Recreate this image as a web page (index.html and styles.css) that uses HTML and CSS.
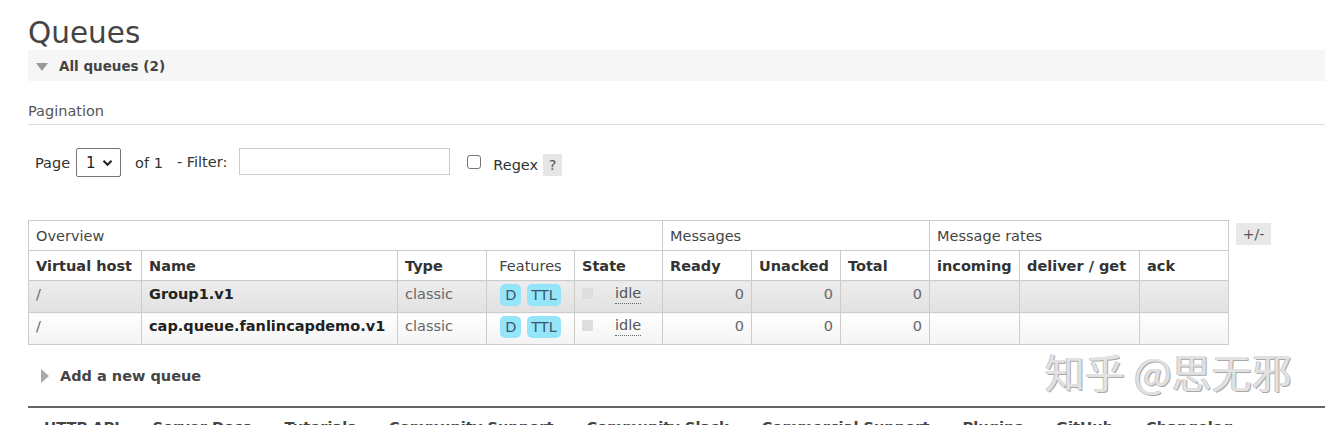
FILE: index.html
```html
<!DOCTYPE html>
<html lang="en">
<head>
<meta charset="utf-8">
<title>Queues</title>
<link rel="stylesheet" href="styles.css">
</head>
<body>
<div class="page">
  <h1 class="title">Queues</h1>
  <div class="section">
    <h2 class="sec-head"><span class="tri-down"></span>All queues (2)</h2>
    <div class="sec-body">
      <h3 class="pag-title">Pagination</h3>
      <div class="pag-row">
        <span class="lbl">Page</span>
        <div class="fake-select"><span>1</span>
          <svg class="chev" width="11" height="8" viewBox="0 0 11 8"><path d="M1.5 1.8 L5.5 5.8 L9.5 1.8" fill="none" stroke="#222" stroke-width="2"/></svg>
        </div>
        <span class="lbl of">of 1</span>
        <span class="lbl filter">- Filter:</span>
        <input class="filter-input" type="text">
        <span class="checkbox"></span>
        <span class="lbl regex">Regex</span>
        <span class="help">?</span>
      </div>
      <div class="table-wrap">
        <table class="list">
          <colgroup>
            <col class="c113"><col class="c256"><col class="c89"><col class="c88"><col class="c88">
            <col class="c89"><col class="c89"><col class="c89"><col class="c90"><col class="c120"><col class="c89">
          </colgroup>
          <thead>
            <tr class="group">
              <th colspan="5">Overview</th>
              <th colspan="3">Messages</th>
              <th colspan="3">Message rates</th>
            </tr>
            <tr class="cols">
              <th>Virtual host</th>
              <th>Name</th>
              <th>Type</th>
              <th class="plain center">Features</th>
              <th>State</th>
              <th>Ready</th>
              <th>Unacked</th>
              <th>Total</th>
              <th>incoming</th>
              <th>deliver / get</th>
              <th>ack</th>
            </tr>
          </thead>
          <tbody>
            <tr class="alt1">
              <td class="light">/</td>
              <td class="name">Group1.v1</td>
              <td class="light">classic</td>
              <td class="center"><span class="badge">D</span><span class="badge">TTL</span></td>
              <td><span class="state"><span class="sq"></span><abbr class="idle">idle</abbr></span></td>
              <td class="num">0</td>
              <td class="num">0</td>
              <td class="num">0</td>
              <td></td><td></td><td></td>
            </tr>
            <tr class="alt2">
              <td class="light">/</td>
              <td class="name">cap.queue.fanlincapdemo.v1</td>
              <td class="light">classic</td>
              <td class="center"><span class="badge">D</span><span class="badge">TTL</span></td>
              <td><span class="state"><span class="sq"></span><abbr class="idle">idle</abbr></span></td>
              <td class="num">0</td>
              <td class="num">0</td>
              <td class="num">0</td>
              <td></td><td></td><td></td>
            </tr>
          </tbody>
        </table>
        <span class="plusminus">+/-</span>
      </div>
    </div>
  </div>
  <div class="sec-closed"><span class="tri-right"></span>Add a new queue</div>
  <div class="footer">
    <a>HTTP API</a>
    <a>Server Docs</a>
    <a>Tutorials</a>
    <a>Community Support</a>
    <a>Community Slack</a>
    <a>Commercial Support</a>
    <a>Plugins</a>
    <a>GitHub</a>
    <a>Changelog</a>
  </div>
</div>
<div class="watermark">知乎 @思无邪</div>
</body>
</html>
```
FILE: styles.css
```css
html, body {
  margin: 0;
  padding: 0;
  background: #fff;
  overflow: hidden;
}
body {
  font-family: "DejaVu Sans", Verdana, sans-serif;
  font-size: 14.5px;
  color: #484848;
  position: relative;
  width: 1325px;
  height: 425px;
}
.page {
  padding-left: 28px;
}
.title {
  margin: 0;
  padding-top: 16px;
  font-size: 29.5px;
  font-weight: normal;
  line-height: 34px;
  color: #444;
}
.sec-head {
  margin: 0;
  height: 31px;
  background: #f6f6f6;
  display: flex;
  align-items: center;
  font-size: 13.5px;
  font-weight: bold;
  color: #444;
}
.tri-down {
  width: 0;
  height: 0;
  border-left: 6px solid transparent;
  border-right: 6px solid transparent;
  border-top: 8px solid #999;
  margin-left: 8px;
  margin-right: 11px;
  margin-top: 2px;
}
.pag-title {
  margin: 21px 0 0 0;
  font-size: 14.5px;
  font-weight: normal;
  line-height: 18px;
  padding-bottom: 4px;
  border-bottom: 1px solid #ddd;
  color: #555;
}
.pag-row {
  margin-top: 23px;
  display: flex;
  align-items: center;
  height: 29px;
  padding-left: 7px;
  color: #333;
}
.lbl { white-space: nowrap; }
.fake-select {
  margin-left: 6px;
  width: 45px;
  height: 29px;
  box-sizing: border-box;
  border: 1px solid #767676;
  border-radius: 2px;
  display: flex;
  align-items: center;
  justify-content: space-between;
  padding: 0 7px 0 9px;
  color: #222;
  font-size: 15px;
}
.of { margin-left: 14px; }
.filter { margin-left: 14px; margin-top: -2px; }
.filter-input {
  margin: 0 0 0 12px;
  width: 211px;
  height: 27px;
  box-sizing: border-box;
  border: 1px solid #ccc;
  padding: 0;
  align-self: flex-start;
}
.checkbox {
  margin-left: 17px;
  width: 14px;
  height: 14px;
  box-sizing: border-box;
  border: 1px solid #767676;
  border-radius: 3px;
  margin-top: -2px;
}
.regex { margin-left: 12px; margin-top: 4px; }
.help {
  margin-left: 5px;
  width: 19px;
  height: 22px;
  background: #e6e6e6;
  color: #555;
  display: flex;
  align-items: center;
  justify-content: center;
  margin-top: 4px;
}
.table-wrap {
  margin-top: 43px;
  display: flex;
  align-items: flex-start;
}
.list {
  border-collapse: collapse;
  table-layout: fixed;
  width: 1200px;
  border: 1px solid #ccc;
}
.c113 { width: 113px; }
.c256 { width: 256px; }
.c89 { width: 89px; }
.c88 { width: 88px; }
.c90 { width: 90px; }
.c120 { width: 120px; }
.list th, .list td {
  border: 1px solid #ccc;
  padding: 0 7px;
  text-align: left;
  white-space: nowrap;
  overflow: hidden;
}
.list tr.group th {
  height: 29px;
  font-weight: normal;
  color: #444;
}
.list tr.cols th {
  height: 29px;
  font-weight: bold;
  color: #333;
}
.list tr.cols th.plain { font-weight: normal; color: #444; }
.list .center { text-align: center; }
.list td {
  height: 32px;
  vertical-align: top;
  padding-top: 2px;
  line-height: 22px;
  box-sizing: border-box;
}
.list tr.alt1 td { background: linear-gradient(#ededed, #e1e1e1); }
.list tr.alt2 td { background: linear-gradient(#ffffff, #f3f3f3); }
.list td.light { color: #666; }
.list td.name { font-weight: bold; color: #222; }
.list td.num { text-align: right; color: #666; }
.badge {
  display: inline-block;
  background: #95e5fa;
  color: #3d5866;
  border-radius: 5px;
  padding: 0 4px;
  min-width: 13px;
  line-height: 22px;
  margin: 1px 3px 0;
  text-align: center;
}
.state {
  display: flex;
  align-items: flex-start;
}
.sq {
  width: 11px;
  height: 11px;
  background: #dedede;
  margin-top: 5px;
  margin-right: 22px;
}
.idle {
  text-decoration: none;
  border-bottom: 1px dotted #666;
  line-height: 20px;
  color: #555;
}
.plusminus {
  margin-left: 7px;
  margin-top: 3px;
  width: 35px;
  height: 22px;
  background: #e8e8e8;
  color: #555;
  display: flex;
  align-items: center;
  justify-content: center;
  font-size: 14px;
}
.sec-closed {
  margin-top: 20px;
  height: 22px;
  display: flex;
  align-items: center;
  font-weight: bold;
  color: #444;
}
.tri-right {
  width: 0;
  height: 0;
  border-top: 7px solid transparent;
  border-bottom: 7px solid transparent;
  border-left: 8px solid #aaa;
  margin-left: 13px;
  margin-right: 11px;
}
.footer {
  margin-top: 19px;
  border-top: 2px solid #666;
  padding: 10px 0 0 16px;
  display: flex;
  gap: 33px;
  font-weight: bold;
  color: #444;
  font-size: 14.6px;
}
.footer a { white-space: nowrap; }
.watermark {
  position: absolute;
  left: 1045px;
  top: 346px;
  font-family: "Noto Sans CJK SC", sans-serif;
  font-size: 40px;
  line-height: 50px;
  color: #e2e2e2;
  text-shadow: 1px 1px 0 #a8a8a8, -1px 0 0 #c8c8c8;
  white-space: nowrap;
}
```
